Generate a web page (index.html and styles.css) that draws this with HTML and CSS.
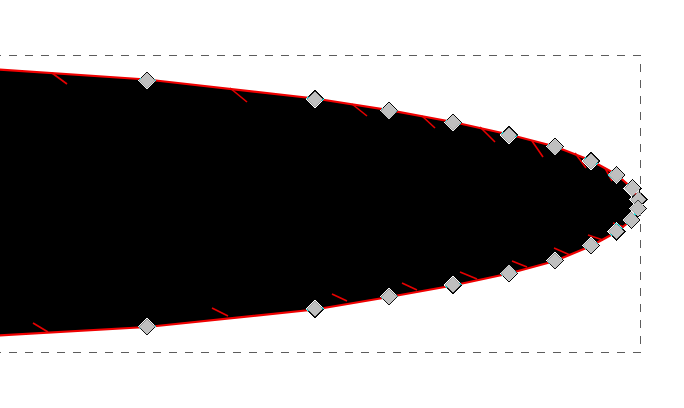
FILE: index.html
```html
<!DOCTYPE html>
<html>
<head>
<meta charset="utf-8">
<title>Node editor canvas</title>
<link rel="stylesheet" href="styles.css">
</head>
<body>
<div class="canvas">
<svg class="drawing" width="684" height="408" viewBox="0 0 684 408" xmlns="http://www.w3.org/2000/svg">
  <!-- bounding box -->
  <g class="bbox">
    <line x1="0" y1="55.5" x2="641" y2="55.5"/>
    <line x1="0" y1="352.5" x2="641" y2="352.5"/>
    <line x1="640.5" y1="55" x2="640.5" y2="353"/>
  </g>
  <!-- shape -->
  <path class="shape" d="M -45,66.5 L 147,79.5 L 315,98.5 L 389,110.2 L 453,122 L 509,134.5 L 555,146.5 L 591,160.5 L 616.5,174.5 L 632,188 L 638.5,199 L 640,204 L 638,209 L 631.5,220 L 616.5,232 L 591,246 L 555,261 L 509,273.5 L 453,285.5 L 389,297 L 315,309.5 L 147,327 L -45,338 Z"/>
  <!-- direction ticks -->
  <g class="ticks">
    <line x1="52" y1="73" x2="67" y2="84"/>
    <line x1="230" y1="88" x2="247" y2="102"/>
    <line x1="352" y1="104" x2="367" y2="116"/>
    <line x1="422" y1="116" x2="435" y2="128"/>
    <line x1="480" y1="127" x2="495" y2="142"/>
    <line x1="532" y1="141" x2="543" y2="157"/>
    <line x1="575" y1="153" x2="586" y2="168"/>
    <line x1="605" y1="168" x2="612" y2="181"/>
    <line x1="48" y1="332" x2="33" y2="323"/>
    <line x1="228" y1="316" x2="212" y2="308"/>
    <line x1="347" y1="301" x2="332" y2="294"/>
    <line x1="417" y1="290" x2="402" y2="283"/>
    <line x1="477" y1="279" x2="460" y2="272"/>
    <line x1="527" y1="267" x2="512" y2="261"/>
    <line x1="570" y1="255" x2="554" y2="248"/>
    <line x1="603" y1="240" x2="588" y2="235"/>
    <line x1="624" y1="227" x2="613" y2="223"/>
  </g>
  <!-- nodes -->
  <g class="nodes">
    <g transform="translate(147,80.5)"><polygon class="nfill" points="0,-8 8,0 0,8 -8,0"/><polygon class="nline" points="0,-8.5 8.5,0 0,8.5 -8.5,0"/></g>
    <g transform="translate(315,99)"><polygon class="nfill" points="0,-8 8,0 0,8 -8,0"/><polygon class="nline" points="0,-8.5 8.5,0 0,8.5 -8.5,0"/></g>
    <g transform="translate(389,110.7)"><polygon class="nfill" points="0,-8 8,0 0,8 -8,0"/><polygon class="nline" points="0,-8.5 8.5,0 0,8.5 -8.5,0"/></g>
    <g transform="translate(453,122.5)"><polygon class="nfill" points="0,-8 8,0 0,8 -8,0"/><polygon class="nline" points="0,-8.5 8.5,0 0,8.5 -8.5,0"/></g>
    <g transform="translate(509,135)"><polygon class="nfill" points="0,-8 8,0 0,8 -8,0"/><polygon class="nline" points="0,-8.5 8.5,0 0,8.5 -8.5,0"/></g>
    <g transform="translate(555,146.7)"><polygon class="nfill" points="0,-8 8,0 0,8 -8,0"/><polygon class="nline" points="0,-8.5 8.5,0 0,8.5 -8.5,0"/></g>
    <g transform="translate(591,161)"><polygon class="nfill" points="0,-8 8,0 0,8 -8,0"/><polygon class="nline" points="0,-8.5 8.5,0 0,8.5 -8.5,0"/></g>
    <g transform="translate(616.5,175)"><polygon class="nfill" points="0,-8 8,0 0,8 -8,0"/><polygon class="nline" points="0,-8.5 8.5,0 0,8.5 -8.5,0"/></g>
    <g transform="translate(632.5,188.3)"><polygon class="nfill" points="0,-8 8,0 0,8 -8,0"/><polygon class="nline" points="0,-8.5 8.5,0 0,8.5 -8.5,0"/></g>
    <g transform="translate(638.5,199.5)"><polygon class="nfill" points="0,-8 8,0 0,8 -8,0"/><polygon class="nline" points="0,-8.5 8.5,0 0,8.5 -8.5,0"/></g>
    <g transform="translate(638,208.5)"><polygon class="nfill" points="0,-8 8,0 0,8 -8,0"/><polygon class="nline" points="0,-8.5 8.5,0 0,8.5 -8.5,0"/></g>
    <g transform="translate(631.5,220)"><polygon class="nfill" points="0,-8 8,0 0,8 -8,0"/><polygon class="nline" points="0,-8.5 8.5,0 0,8.5 -8.5,0"/></g>
    <g transform="translate(616.5,231.5)"><polygon class="nfill" points="0,-8 8,0 0,8 -8,0"/><polygon class="nline" points="0,-8.5 8.5,0 0,8.5 -8.5,0"/></g>
    <g transform="translate(591,245.5)"><polygon class="nfill" points="0,-8 8,0 0,8 -8,0"/><polygon class="nline" points="0,-8.5 8.5,0 0,8.5 -8.5,0"/></g>
    <g transform="translate(555,260.7)"><polygon class="nfill" points="0,-8 8,0 0,8 -8,0"/><polygon class="nline" points="0,-8.5 8.5,0 0,8.5 -8.5,0"/></g>
    <g transform="translate(509,273.3)"><polygon class="nfill" points="0,-8 8,0 0,8 -8,0"/><polygon class="nline" points="0,-8.5 8.5,0 0,8.5 -8.5,0"/></g>
    <g transform="translate(453,285)"><polygon class="nfill" points="0,-8 8,0 0,8 -8,0"/><polygon class="nline" points="0,-8.5 8.5,0 0,8.5 -8.5,0"/></g>
    <g transform="translate(389,296.7)"><polygon class="nfill" points="0,-8 8,0 0,8 -8,0"/><polygon class="nline" points="0,-8.5 8.5,0 0,8.5 -8.5,0"/></g>
    <g transform="translate(315,309)"><polygon class="nfill" points="0,-8 8,0 0,8 -8,0"/><polygon class="nline" points="0,-8.5 8.5,0 0,8.5 -8.5,0"/></g>
    <g transform="translate(147,326.7)"><polygon class="nfill" points="0,-8 8,0 0,8 -8,0"/><polygon class="nline" points="0,-8.5 8.5,0 0,8.5 -8.5,0"/></g>
  </g>
</svg>
</div>
</body>
</html>
```

FILE: styles.css
```css
html, body {
  margin: 0;
  padding: 0;
  background: #ffffff;
  overflow: hidden;
}

.canvas {
  width: 684px;
  height: 408px;
  background: #ffffff;
}

.drawing {
  display: block;
}

.bbox line {
  stroke: #5c5c5c;
  stroke-width: 1;
  stroke-dasharray: 8 8;
  stroke-dashoffset: 7;
  shape-rendering: crispEdges;
}

.shape {
  fill: #000000;
  stroke: #f00000;
  stroke-width: 2.2;
  stroke-linejoin: round;
}

.ticks line {
  stroke: #e80000;
  stroke-width: 1.6;
  stroke-linecap: butt;
}

.nfill {
  fill: #bfbfbf;
  stroke: none;
}

.nline {
  fill: none;
  stroke: #ffffff;
  stroke-width: 1;
  mix-blend-mode: difference;
  shape-rendering: crispEdges;
}
```
